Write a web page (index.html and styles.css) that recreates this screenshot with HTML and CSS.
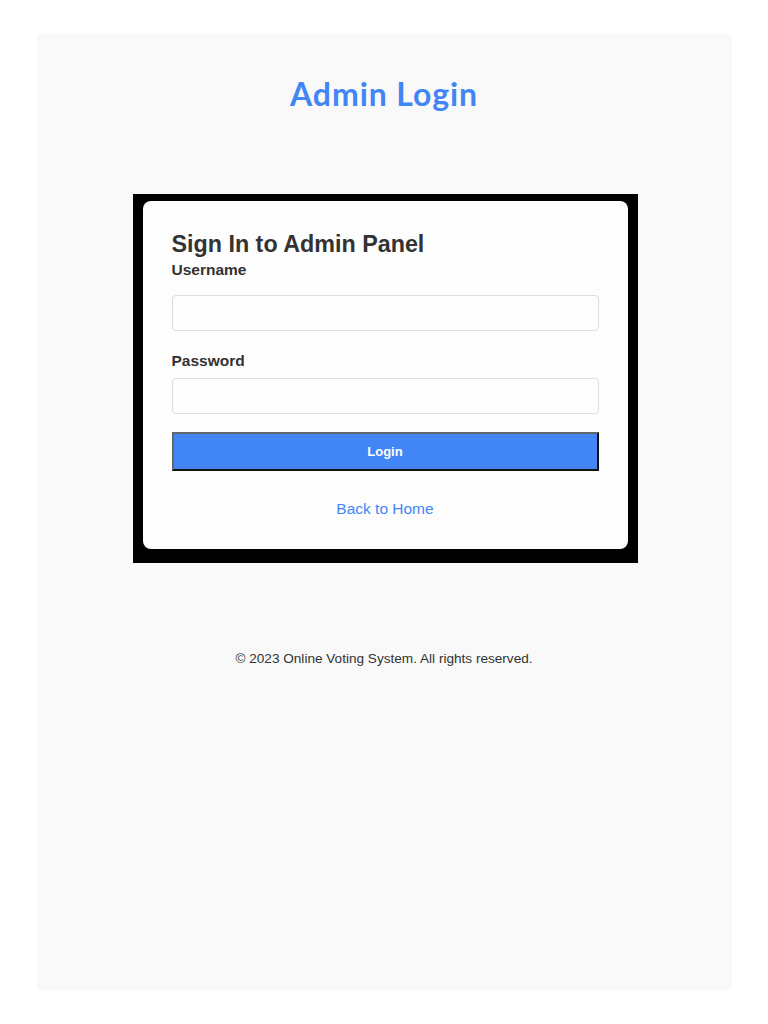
FILE: index.html
```html
<!DOCTYPE html>
<html lang="en">
<head>
    <meta charset="UTF-8">
    <meta name="viewport" content="width=device-width, initial-scale=1.0">
    <title>Admin Login</title>
    <link rel="stylesheet" href="styles.css">
</head>
<body>
    <div class="container">
        <h1>Admin Login</h1>

        <div class="login-frame">
            <div class="login-card">
                <h2>Sign In to Admin Panel</h2>
                <form>
                    <div class="form-group">
                        <label for="username">Username</label>
                        <input type="text" id="username" name="username">
                    </div>
                    <div class="form-group">
                        <label for="password">Password</label>
                        <input type="password" id="password" name="password">
                    </div>
                    <button type="submit" class="login-btn">Login</button>
                </form>
                <a href="#" class="back-link">Back to Home</a>
            </div>
        </div>

        <footer>
            <p>&copy; 2023 Online Voting System. All rights reserved.</p>
        </footer>
    </div>
</body>
</html>
```

FILE: styles.css
```css
* {
    margin: 0;
    padding: 0;
    box-sizing: border-box;
}

body {
    font-family: 'Liberation Sans', Arial, sans-serif;
    background-color: #fff;
    color: #333;
    padding: 34px 0;
}

.container {
    width: 695px;
    min-height: 956px;
    margin: 0 auto;
    background-color: #f9f9f9;
    padding-top: 41px;
}

h1 {
    font-family: 'Lato', sans-serif;
    font-size: 32px;
    font-weight: 700;
    letter-spacing: 0.9px;
    color: #4285f4;
    text-align: center;
    line-height: 38px;
    margin-bottom: 81px;
}

.login-frame {
    width: 505px;
    background-color: #000;
    padding: 7px 10px 14px;
    margin-left: 96px;
}

.login-card {
    background-color: #fdfdfd;
    border-radius: 8px;
    padding: 29px 29px 31px;
}

.login-card h2 {
    font-size: 23.3px;
    font-weight: 700;
    line-height: 28px;
    color: #333;
}

.form-group {
    margin-bottom: 18px;
}

.form-group label {
    display: block;
    font-size: 15.5px;
    font-weight: 700;
    line-height: 24px;
    margin-bottom: 5px;
}

.form-group:first-child label {
    margin-bottom: 13px;
}

.form-group input {
    display: block;
    width: 100%;
    height: 36px;
    border: 1px solid #ddd;
    border-radius: 4px;
    background-color: #fdfdfd;
    padding: 8px;
    font-size: 15px;
}

.login-btn {
    display: block;
    width: 100%;
    height: 39px;
    background-color: #4285f4;
    color: #fff;
    font-family: 'Liberation Sans', Arial, sans-serif;
    font-size: 13px;
    font-weight: 700;
    border: 2px solid;
    border-color: #666 #111 #111 #666;
    cursor: pointer;
}

.back-link {
    display: block;
    text-align: center;
    color: #4285f4;
    text-decoration: none;
    font-size: 15.5px;
    margin-top: 29px;
}

footer {
    text-align: center;
    margin-top: 88px;
    font-size: 13.6px;
    color: #333;
}
```
